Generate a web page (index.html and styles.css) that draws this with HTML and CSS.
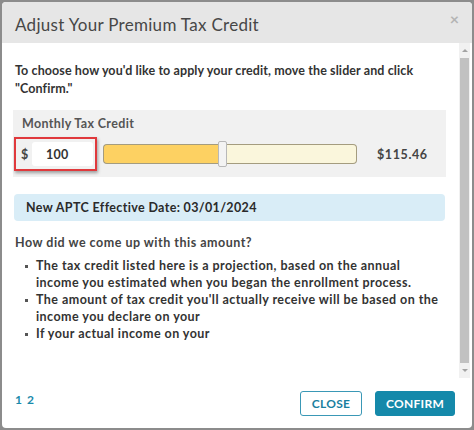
FILE: index.html
```html
<!DOCTYPE html>
<html lang="en">
<head>
<meta charset="utf-8">
<title>Adjust Your Premium Tax Credit</title>
<link rel="stylesheet" href="styles.css">
</head>
<body>
<div class="modal">
  <div class="modal-header">
    <h1 class="modal-title">Adjust Your Premium Tax Credit</h1>
    <span class="modal-close">&times;</span>
  </div>
  <div class="modal-main">
    <div class="modal-body">
      <p class="intro">To choose how you'd like to apply your credit, move the slider and click "Confirm."</p>
      <div class="credit-panel">
        <div class="panel-label">Monthly Tax Credit</div>
        <div class="credit-row">
          <div class="amount-box">
            <span class="dollar">$</span>
            <span class="amount-input">100</span>
          </div>
          <div class="slider">
            <div class="slider-fill" style="width: 115px"></div>
            <div class="slider-thumb"></div>
            <div class="slider-rest"></div>
          </div>
          <span class="max-amount">$115.46</span>
        </div>
      </div>
      <div class="alert-info">New APTC Effective Date: 03/01/2024</div>
      <p class="question">How did we come up with this amount?</p>
      <ul class="reasons">
        <li>The tax credit listed here is a projection, based on the annual income you estimated when you began the enrollment process.</li>
        <li>The amount of tax credit you'll actually receive will be based on the income you declare on your</li>
        <li>If your actual income on your</li>
      </ul>
    </div>
    <div class="scrollbar">
      <span class="scroll-arrow up"></span>
      <div class="scroll-track"><div class="scroll-thumb"></div></div>
      <span class="scroll-arrow down"></span>
    </div>
  </div>
  <div class="modal-footer">
    <span class="pager">1 2</span>
    <div class="actions">
      <button class="btn btn-outline">CLOSE</button>
      <button class="btn btn-primary">CONFIRM</button>
    </div>
  </div>
</div>
</body>
</html>
```
FILE: styles.css
```css
* { box-sizing: border-box; }
html, body { margin: 0; padding: 0; }
body {
  background: #8c8c8c;
  font-family: Lato, "Liberation Sans", sans-serif;
  color: #333;
  height: 430px;
  overflow: hidden;
  padding: 2px 2px 0 2px;
}
.modal {
  width: 470px;
  height: 426px;
  background: #fff;
  border-radius: 4px;
  display: flex;
  flex-direction: column;
  overflow: hidden;
}
.modal-header {
  height: 41px;
  background: #e6e6e6;
  display: flex;
  align-items: center;
  justify-content: space-between;
  padding: 3px 13px 0 13px;
  flex: none;
}
.modal-title {
  margin: 0;
  font-size: 17px;
  font-weight: 400;
  color: #474747;
  letter-spacing: 0.3px;
}
.modal-close {
  font-size: 16px;
  color: #b4b4b4;
  font-weight: 700;
  margin-top: -12px;
}
.modal-main {
  height: 335px;
  display: flex;
  flex: none;
}
.modal-body {
  flex: 1;
  padding: 19px 13px 0 11px;
  overflow: hidden;
}
.intro {
  margin: 0 0 12px 2px;
  font-size: 12.5px;
  font-weight: 700;
  line-height: 18px;
  color: #333;
  letter-spacing: 0.1px;
}
.credit-panel {
  background: #f1f1f1;
  padding: 7px 0 6px 0;
}
.panel-label {
  font-size: 12.5px;
  font-weight: 700;
  color: #555;
  padding-left: 9px;
  line-height: 14px;
  margin-bottom: 6px;
  letter-spacing: 0.35px;
}
.credit-row {
  display: flex;
  align-items: center;
}
.amount-box {
  width: 83px;
  height: 34px;
  border: 2px solid #e0393c;
  box-shadow: 1px 2px 3px rgba(0,0,0,0.35);
  display: flex;
  align-items: center;
  padding-left: 5px;
  margin-left: 1px;
}
.dollar {
  font-size: 12.5px;
  font-weight: 700;
  color: #444;
  width: 11px;
}
.amount-input {
  width: 61px;
  height: 24px;
  background: #fff;
  border-radius: 3px;
  font-size: 12.5px;
  font-weight: 700;
  color: #333;
  display: flex;
  align-items: center;
  padding-left: 14px;
  letter-spacing: 0.3px;
}
.slider {
  margin-left: 6px;
  width: 254px;
  height: 20px;
  display: flex;
  align-items: center;
}
.slider-fill {
  height: 20px;
  background: #fdd162;
  border: 1px solid #a49c7f;
  border-right: none;
  border-radius: 4px 0 0 4px;
}
.slider-thumb {
  width: 9px;
  height: 26px;
  background: #f3f3f3;
  border: 1px solid #b8b8b8;
  border-radius: 2px;
  flex: none;
}
.slider-rest {
  flex: 1;
  height: 20px;
  background: #faf6dc;
  border: 1px solid #a49c7f;
  border-left: none;
  border-radius: 0 4px 4px 0;
}
.max-amount {
  margin-left: 20px;
  font-size: 12.5px;
  font-weight: 700;
  color: #444;
  letter-spacing: 0.6px;
}
.alert-info {
  margin: 17px 1px 0;
  background: #d9edf7;
  border-radius: 4px;
  height: 27px;
  padding-left: 12px;
  display: flex;
  align-items: center;
  font-size: 12.5px;
  font-weight: 700;
  color: #2a2a2a;
  letter-spacing: 0.35px;
}
.question {
  margin: 13px 0 6px 2px;
  font-size: 12.5px;
  font-weight: 700;
  color: #444;
  line-height: 17px;
  letter-spacing: 0.5px;
}
.reasons {
  margin: 0;
  padding: 0 7px 0 12px;
  list-style: none;
  font-size: 12.5px;
  font-weight: 700;
  color: #333;
  line-height: 17px;
  letter-spacing: 0.45px;
}
.reasons li {
  padding-left: 11px;
  text-indent: -11px;
}
.reasons li::before {
  content: "";
  display: inline-block;
  width: 3px;
  height: 3px;
  background: #555;
  margin-right: 8px;
  vertical-align: middle;
}
.scrollbar {
  width: 11px;
  margin-right: 2px;
  background: #f1f1f1;
  display: flex;
  flex-direction: column;
  align-items: center;
}
.scroll-arrow {
  height: 15px;
  width: 11px;
  display: flex;
  align-items: center;
  justify-content: center;
  flex: none;
}
.scroll-arrow::before {
  content: "";
  border-left: 3px solid transparent;
  border-right: 3px solid transparent;
}
.scroll-arrow.up::before { border-bottom: 3px solid #a3a3a3; }
.scroll-arrow.down::before { border-top: 3px solid #a3a3a3; }
.scroll-track {
  flex: 1;
  width: 11px;
  padding: 0 1px;
}
.scroll-thumb {
  height: 100%;
  background: #c1c1c1;
}
.modal-footer {
  flex: 1;
  display: flex;
  justify-content: space-between;
  align-items: flex-start;
  padding: 13px 17px 0 13px;
}
.pager {
  font-size: 12px;
  font-weight: 700;
  color: #1a8aab;
  margin-top: 1px;
  letter-spacing: 1px;
}
.actions {
  display: flex;
  gap: 13px;
}
.btn {
  height: 25px;
  border-radius: 3px;
  font-family: Lato, "Liberation Sans", sans-serif;
  font-size: 12px;
  font-weight: 700;
  letter-spacing: 0.3px;
  padding: 0;
  cursor: pointer;
}
.btn-outline {
  width: 62px;
  background: #fff;
  border: 1px solid #3a98b6;
  color: #1a7f9f;
}
.btn-primary {
  width: 80px;
  background: #1589aa;
  border: 1px solid #1589aa;
  color: #fff;
}
```
